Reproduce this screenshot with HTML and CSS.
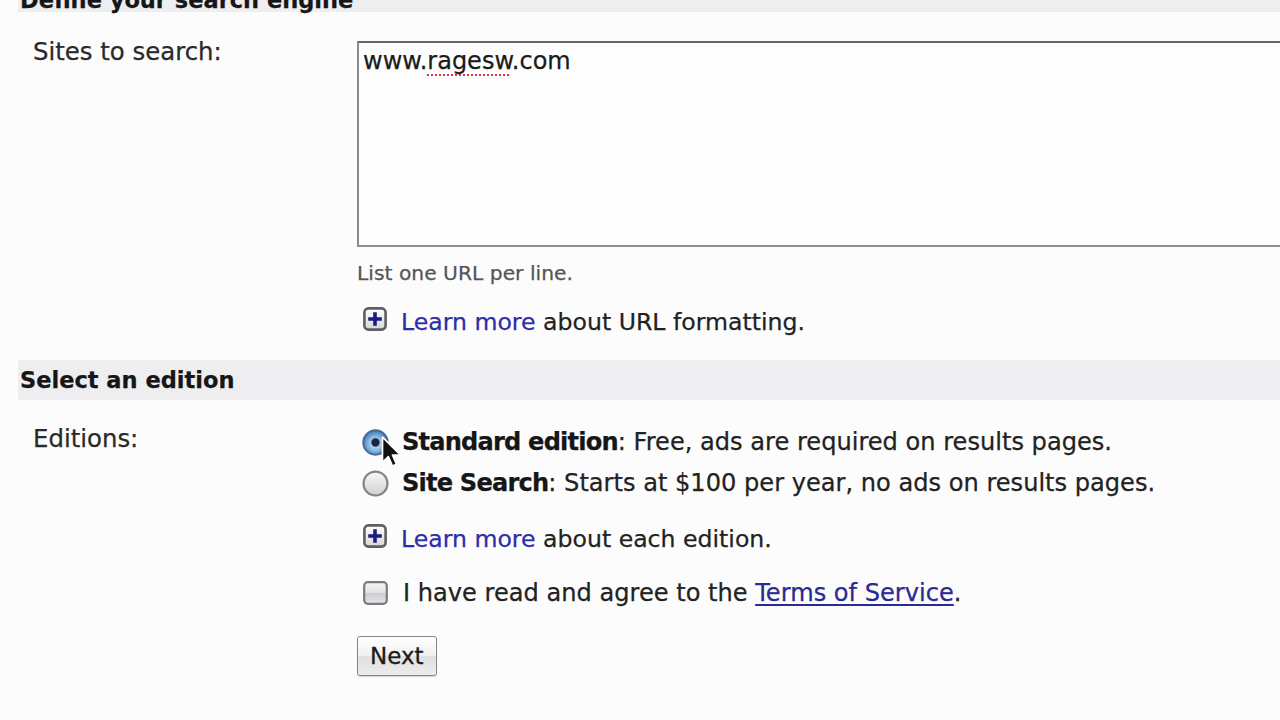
FILE: index.html
```html
<!DOCTYPE html>
<html lang="en">
<head>
<meta charset="utf-8">
<title>Define your search engine</title>
<link rel="stylesheet" href="styles.css">
</head>
<body>
<div class="page">
  <div class="section-head first">Define your search engine</div>
  <div class="row row-sites">
    <div class="label">Sites to search:</div>
    <div class="field">
      <div class="textbox">www.<span class="misspelt">ragesw</span>.com</div>
      <div class="hint">List one URL per line.</div>
      <div class="more more-url">
        <svg class="plus-icon" width="24" height="24" viewBox="0 0 24 24">
          <defs>
            <linearGradient id="pg1" x1="0" y1="0" x2="0" y2="1">
              <stop offset="0" stop-color="#ffffff"/>
              <stop offset="1" stop-color="#d6d6da"/>
            </linearGradient>
          </defs>
          <rect x="1.4" y="1.4" width="21.2" height="21.2" rx="4" fill="url(#pg1)" stroke="#5e5e64" stroke-width="2.6"/>
          <path d="M12 5.2V18.8M5.2 12H18.8" stroke="#1c1c7e" stroke-width="3.6"/>
        </svg>
        <span><a href="#" class="link">Learn more</a> about URL formatting.</span>
      </div>
    </div>
  </div>

  <div class="section-head second">Select an edition</div>
  <div class="row row-editions">
    <div class="label">Editions:</div>
    <div class="field field-editions">
      <div class="option">
        <svg class="radio" width="27" height="27" viewBox="0 0 26 26">
          <defs>
            <radialGradient id="rb" cx="0.5" cy="0.55" r="0.55">
              <stop offset="0" stop-color="#d8ecfb"/>
              <stop offset="0.55" stop-color="#86b6e2"/>
              <stop offset="1" stop-color="#3a72b0"/>
            </radialGradient>
          </defs>
          <circle cx="13" cy="13" r="11.8" fill="url(#rb)" stroke="#4a6a90" stroke-width="1.8"/>
          <circle cx="13" cy="13" r="4" fill="#1b2740"/>
        </svg>
        <span><b>Standard edition</b>: Free, ads are required on results pages.</span>
      </div>
      <div class="option">
        <svg class="radio" width="27" height="27" viewBox="0 0 26 26">
          <defs>
            <linearGradient id="rg" x1="0" y1="0" x2="0" y2="1">
              <stop offset="0" stop-color="#fafafa"/>
              <stop offset="1" stop-color="#d0d0d3"/>
            </linearGradient>
          </defs>
          <circle cx="13" cy="13" r="11.5" fill="url(#rg)" stroke="#85858a" stroke-width="2.2"/>
        </svg>
        <span><b>Site Search</b>: Starts at $100 per year, no ads on results pages.</span>
      </div>
      <div class="more more-edition">
        <svg class="plus-icon" width="24" height="24" viewBox="0 0 24 24">
          <defs>
            <linearGradient id="pg2" x1="0" y1="0" x2="0" y2="1">
              <stop offset="0" stop-color="#ffffff"/>
              <stop offset="1" stop-color="#d6d6da"/>
            </linearGradient>
          </defs>
          <rect x="1.4" y="1.4" width="21.2" height="21.2" rx="4" fill="url(#pg2)" stroke="#5e5e64" stroke-width="2.6"/>
          <path d="M12 5.2V18.8M5.2 12H18.8" stroke="#1c1c7e" stroke-width="3.6"/>
        </svg>
        <span><a href="#" class="link">Learn more</a> about each edition.</span>
      </div>
      <div class="agree">
        <svg class="checkbox" width="25" height="24" viewBox="0 0 25 24">
          <defs>
            <linearGradient id="cg" x1="0" y1="0" x2="0" y2="1">
              <stop offset="0" stop-color="#f6f6f6"/>
              <stop offset="0.5" stop-color="#e2e2e4"/>
              <stop offset="0.52" stop-color="#cdcdd0"/>
              <stop offset="1" stop-color="#e6e6e8"/>
            </linearGradient>
          </defs>
          <rect x="1.2" y="1.2" width="22.6" height="21.6" rx="3.5" fill="url(#cg)" stroke="#7a7a80" stroke-width="2.2"/>
        </svg>
        <span>I have read and agree to the <a href="#" class="link tos">Terms of Service</a>.</span>
      </div>
      <button class="next" type="button">Next</button>
    </div>
  </div>
</div>
<svg class="cursor" width="24" height="35" viewBox="0 0 20 30">
  <path d="M1 1V22.5L6 17.6L9.6 25.8L13 24.3L9.5 16.3H16.3Z" fill="#111" stroke="#fff" stroke-width="1.4" stroke-linejoin="round"/>
</svg>
</body>
</html>
```

FILE: styles.css
```css
html, body {
  margin: 0;
  padding: 0;
  background: #fcfcfc;
  overflow: hidden;
}

body {
  font-family: "DejaVu Sans", "Liberation Sans", Arial, sans-serif;
  color: #222;
  width: 1280px;
  height: 720px;
  position: relative;
  -webkit-text-stroke: 0.25px currentColor;
}

.page {
  padding-left: 18px;
}

.section-head {
  background: #eeeef1;
  font-weight: bold;
  font-size: 22.5px;
  height: 40px;
  line-height: 40px;
  padding-left: 2px;
  color: #161616;
  white-space: nowrap;
}

.section-head.first {
  margin-top: -20px;
  height: 32px;
}

.section-head.second {
  margin-top: 23px;
}

.row {
  display: grid;
  grid-template-columns: 339px 1fr;
}

.row-sites {
  padding-top: 25px;
}

.row-editions {
  padding-top: 24px;
}

.label {
  padding-left: 15px;
  font-size: 24.4px;
  line-height: 30px;
  color: #2a2a2a;
}

.field {
  font-size: 24.1px;
  line-height: 30px;
}

.textbox {
  margin-top: 4px;
  height: 206px;
  box-sizing: border-box;
  border: 2px solid #8c8c8c;
  border-top-color: #666;
  border-right: none;
  padding: 3px 4px;
  font-size: 24px;
  line-height: 30px;
  color: #1a1a1a;
  background: #fdfdfd;
}

.misspelt {
  text-decoration: underline dotted #e0304a;
  text-decoration-thickness: 2px;
  text-underline-offset: 5px;
}

.hint {
  margin-top: 13px;
  font-size: 20.3px;
  line-height: 26px;
  color: #555;
}

.more {
  display: flex;
  align-items: flex-start;
  gap: 14px;
  padding-left: 6px;
  color: #222;
  font-size: 23.6px;
}

.more-url {
  margin-top: 21px;
}

.more-edition {
  margin-top: 26px;
}

.plus-icon {
  flex: none;
  display: block;
}

.link {
  color: #2d2daa;
  text-decoration: none;
}

.link.tos {
  color: #2a2a94;
  text-decoration: underline;
  text-decoration-thickness: 2px;
  text-underline-offset: 3px;
}

.field-editions {
  padding-top: 3px;
}

.option {
  display: flex;
  align-items: center;
  gap: 13px;
  padding-left: 5px;
  height: 30px;
  margin-bottom: 11px;
  white-space: nowrap;
}

.option b {
  color: #161616;
  letter-spacing: -0.8px;
}

.radio {
  flex: none;
  display: block;
}

.agree {
  display: flex;
  align-items: center;
  gap: 15px;
  padding-left: 6px;
  height: 30px;
  margin-top: 24px;
  white-space: nowrap;
}

.checkbox {
  flex: none;
  display: block;
}

.next {
  display: block;
  margin-top: 28px;
  height: 40px;
  padding: 0 12px;
  font-family: "DejaVu Sans", "Liberation Sans", Arial, sans-serif;
  font-size: 23px;
  line-height: 38px;
  color: #1a1a1a;
  -webkit-text-stroke: 0.3px currentColor;
  border: 1px solid #858585;
  border-radius: 3px;
  background: linear-gradient(#ffffff, #f0f0f0 50%, #e0e0e0 51%, #ececec);
  box-shadow: 0 1px 1px rgba(0, 0, 0, 0.15);
}

.cursor {
  position: absolute;
  left: 381px;
  top: 436px;
  -webkit-text-stroke: 0;
}
```
